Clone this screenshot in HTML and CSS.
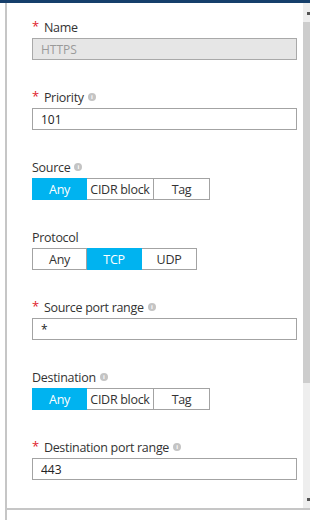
FILE: index.html
```html
<!DOCTYPE html>
<html lang="en">
<head>
    <meta charset="UTF-8">
    <meta name="viewport" content="width=device-width, initial-scale=1.0">
    <title>Add inbound security rule</title>
    <link rel="stylesheet" href="styles.css">
</head>
<body>
    <div class="blade">
        <div class="panel">
            <form class="content">
                <div class="field">
                    <label><span class="req">*</span>Name</label>
                    <input type="text" class="text-input disabled" value="HTTPS" disabled>
                </div>

                <div class="field">
                    <label><span class="req">*</span>Priority <span class="info">i</span></label>
                    <input type="text" class="text-input" value="101">
                </div>

                <div class="field">
                    <label>Source <span class="info">i</span></label>
                    <div class="toggle">
                        <button type="button" class="opt w55 active">Any</button>
                        <button type="button" class="opt w67">CIDR block</button>
                        <button type="button" class="opt w56">Tag</button>
                    </div>
                </div>

                <div class="field">
                    <label>Protocol</label>
                    <div class="toggle">
                        <button type="button" class="opt w55">Any</button>
                        <button type="button" class="opt w55 active">TCP</button>
                        <button type="button" class="opt w55">UDP</button>
                    </div>
                </div>

                <div class="field">
                    <label><span class="req">*</span>Source port range <span class="info">i</span></label>
                    <input type="text" class="text-input" value="*">
                </div>

                <div class="field">
                    <label>Destination <span class="info">i</span></label>
                    <div class="toggle">
                        <button type="button" class="opt w55 active">Any</button>
                        <button type="button" class="opt w67">CIDR block</button>
                        <button type="button" class="opt w56">Tag</button>
                    </div>
                </div>

                <div class="field">
                    <label><span class="req">*</span>Destination port range <span class="info">i</span></label>
                    <input type="text" class="text-input" value="443">
                </div>
            </form>

            <div class="scrollbar">
                <span class="arrow"></span>
                <div class="thumb"></div>
                <span class="arrow"></span>
            </div>
        </div>
        <div class="footer"></div>
    </div>
</body>
</html>
```

FILE: styles.css
```css
/* General */
body {
    margin: 0;
    font-family: "Open Sans", "Liberation Sans", sans-serif;
    background: #fff;
    width: 310px;
    height: 520px;
    overflow: hidden;
}
.blade {
    border-top: 3px solid #163f6b;
    padding-left: 5px;
}
/* Panel with left rule and scrollbar */
.panel {
    display: flex;
    border-left: 2px solid #c6c6c6;
    height: 507px;
    border-bottom: 2px solid #c6c6c6;
    box-sizing: border-box;
}
.content {
    flex: 1;
    padding: 13px 6px 0 25px;
}
.footer {
    height: 10px;
    border-left: 2px solid #c6c6c6;
}
/* Scrollbar */
.scrollbar {
    width: 7px;
    background: #eeeeee;
    display: flex;
    flex-direction: column;
    align-items: flex-end;
    padding-top: 9px;
}
.arrow {
    width: 3px;
    height: 3px;
    background: #555;
}
.thumb {
    width: 7px;
    height: 361px;
    margin: 7px 0 auto;
    background: #cdcdcd;
}
.scrollbar .arrow:last-child {
    margin-bottom: 7px;
}
/* Fields */
.field {
    height: 70px;
}
label {
    display: flex;
    align-items: center;
    font-size: 12.5px;
    color: #333;
    height: 22px;
    letter-spacing: -0.3px;
}
.req {
    color: #e0202a;
    font-size: 13px;
    margin-right: 5px;
    position: relative;
    top: -1px;
}
.info {
    display: inline-block;
    width: 8px;
    height: 8px;
    border-radius: 50%;
    background: #c4c4c4;
    color: #fff;
    font-size: 6px;
    line-height: 8px;
    text-align: center;
    font-weight: bold;
    margin-left: 4px;
}
.text-input {
    display: block;
    width: 265px;
    height: 22px;
    box-sizing: border-box;
    border: 1px solid #a3a3a3;
    padding: 0 8px;
    font-family: inherit;
    font-size: 12px;
    color: #222;
    background: #fff;
    margin: 0;
    outline: none;
}
.text-input.disabled {
    background: #e6e6e6;
    color: #9a9a9a;
    border-color: #a9a9a9;
}
/* Toggle buttons */
.toggle {
    display: flex;
}
.opt {
    height: 22px;
    box-sizing: border-box;
    border: 1px solid #a3a3a3;
    border-left: none;
    background: #fff;
    color: #333;
    font-family: inherit;
    font-size: 12.5px;
    padding: 0;
    margin: 0;
    letter-spacing: -0.3px;
}
.opt:first-child {
    border-left: 1px solid #a3a3a3;
}
.opt.active {
    background: #00b3f0;
    border-color: #00b3f0;
    color: #fff;
}
.w55 { width: 55px; }
.w56 { width: 56px; }
.w67 { width: 67px; }
```
